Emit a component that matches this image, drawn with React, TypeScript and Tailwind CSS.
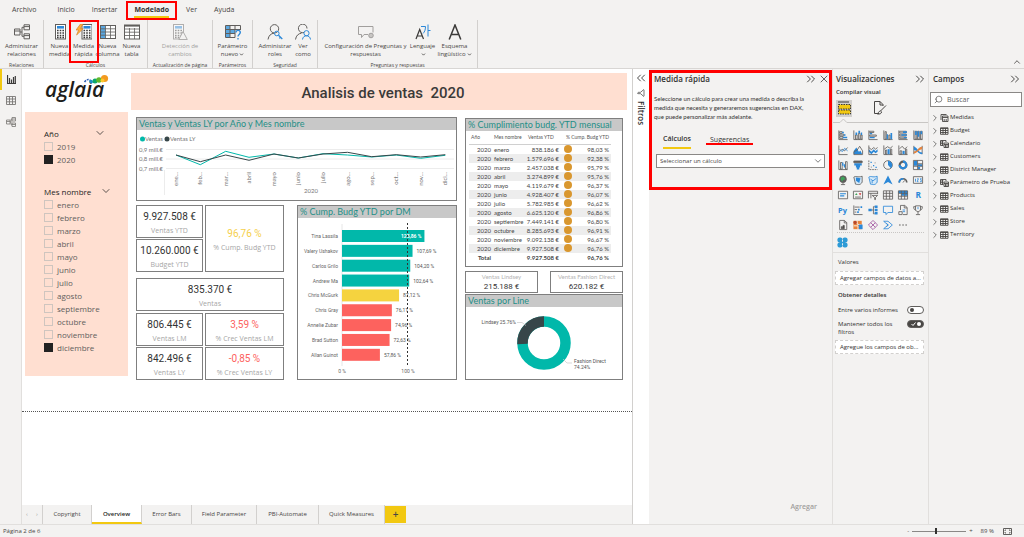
import { useState } from "react";
import type { ReactNode } from "react";
import clsx from "clsx";
import {
  ChevronDown,
  ChevronRight,
  ChevronsLeft,
  ChevronsRight,
  ChevronUp,
  Filter,
  Search,
  X,
} from "lucide-react";

const GRAY = "#605e5c";
const BLUE = "#2b88d8";
const TEAL = "#01b8aa";
const DARK = "#374649";

const menuTabs = ["Archivo", "Inicio", "Insertar", "Modelado", "Ver", "Ayuda"];

const months = [
  "enero",
  "febrero",
  "marzo",
  "abril",
  "mayo",
  "junio",
  "julio",
  "agosto",
  "septiembre",
  "octubre",
  "noviembre",
  "diciembre",
];

const tableRows = [
  ["838.186 €", "98,03 %"],
  ["1.579.696 €", "92,38 %"],
  ["2.457.038 €", "95,79 %"],
  ["3.274.899 €", "95,76 %"],
  ["4.119.679 €", "96,37 %"],
  ["4.928.407 €", "96,07 %"],
  ["5.782.985 €", "96,62 %"],
  ["6.625.120 €", "96,86 %"],
  ["7.449.141 €", "96,80 %"],
  ["8.285.693 €", "96,91 %"],
  ["9.092.138 €", "96,67 %"],
  ["9.927.508 €", "96,76 %"],
];

const managers = [
  { name: "Tina Lassila", value: 125.86, color: TEAL },
  { name: "Valery Ushakov", value: 107.69, color: TEAL },
  { name: "Carlos Grilo", value: 104.2, color: TEAL },
  { name: "Andrew Ma", value: 102.64, color: TEAL },
  { name: "Chris McGurk", value: 87.12, color: "#f5d33f" },
  { name: "Chris Gray", value: 76.11, color: "#fd625e" },
  { name: "Annelie Zubar", value: 74.96, color: "#fd625e" },
  { name: "Brad Sutton", value: 72.63, color: "#fd625e" },
  { name: "Allan Guinot", value: 57.86, color: "#fd625e" },
];

const fields = [
  { name: "Medidas", kind: "calc" },
  { name: "Budget", kind: "table" },
  { name: "Calendario", kind: "date" },
  { name: "Customers", kind: "table" },
  { name: "District Manager", kind: "table" },
  { name: "Parámetro de Prueba", kind: "date" },
  { name: "Products", kind: "table" },
  { name: "Sales", kind: "table" },
  { name: "Store", kind: "table" },
  { name: "Territory", kind: "table" },
];

const pages = [
  { name: "Copyright", width: "w-[49px]" },
  { name: "Overview", width: "w-[50px]" },
  { name: "Error Bars", width: "w-[50px]" },
  { name: "Field Parameter", width: "w-[65px]" },
  { name: "PBI-Automate", width: "w-[62px]" },
  { name: "Quick Measures", width: "w-[66px]" },
];

/* ---------- ribbon ---------- */

const RibbonIcon = ({ children }: { children: ReactNode }) => (
  <svg viewBox="0 0 16 16" className="size-4" fill="none" stroke={GRAY} aria-hidden="true">
    {children}
  </svg>
);

const Calculator = () => (
  <>
    <rect x="3.5" y=".5" width="10" height="14.5" fill="#fff" />
    <rect x="5" y="2" width="7" height="2.6" fill={BLUE} stroke="none" />
    <path d="M5 6.5h7M5 9h7M5 11.5h7M5 13.5h7" strokeWidth="1.4" strokeDasharray="1.6 1.1" stroke="#3b3a39" />
  </>
);

const icons = {
  relations: (
    <RibbonIcon>
      <path d="M.5 5h5.5v6H.5zM10 .8h5.5v5H10zM10 9.8h5.5v5H10zM.5 7h5.5M10 2.6h5.5M10 11.6h5.5M6 8h2M8 3.3v9M8 3.3h2M8 12.3h2" />
    </RibbonIcon>
  ),
  measure: (
    <RibbonIcon>
      <Calculator />
    </RibbonIcon>
  ),
  quick: (
    <RibbonIcon>
      <g transform="translate(2.5 0)">
        <Calculator />
      </g>
      <path d="M4.5 0 0 6h2.6L.6 11 7.2 4.6H4.3L7 0z" fill="#ffb13b" stroke="#d9822b" strokeWidth=".7" />
    </RibbonIcon>
  ),
  column: (
    <RibbonIcon>
      <rect x=".5" y="1.5" width="15" height="13" fill="#fff" />
      <path d="M1 2h4.500v12H1z" fill="#5ba7e0" stroke="none" />
      <path d="M.5 4.800h15M.5 8h15M.5 11.200h15M5.500 1.500v13M10.500 1.500v13" strokeWidth=".8" />
    </RibbonIcon>
  ),
  table: (
    <RibbonIcon>
      <rect x=".5" y="1" width="15" height="14" fill="#fff" />
      <path d="M.5 1.800h15" strokeWidth="1.600" />
      <path d="M.5 5h15M.5 8.200h15M.5 11.500h15M5.500 4v11M10.500 4v11" strokeWidth=".8" />
    </RibbonIcon>
  ),
  detect: (
    <RibbonIcon>
      <g opacity=".45">
        <g transform="translate(-2 0)">
          <Calculator />
        </g>
        <path d="m11 7.500 4.300 8H6.800z" fill="#f3f2f1" />
      </g>
    </RibbonIcon>
  ),
  param: (
    <RibbonIcon>
      <path d="M1 2h4v3.500H1zM1 9.500h4v4H1zM5 5.500h5v4H5zM1 5.500h4v4H1z" fill="#5ba7e0" stroke="none" />
      <path d="M.5 1.500h15V6M.5 1.500v12H10M.5 5.500h15M.5 9.500H10M5 1.500v12M10 1.500v12" />
      <path d="M11 8.500c.3-3 4.500-2.600 4.300.2-.2 1.700-2.300 1.900-2.300 3.800M13 14v1.500" stroke={BLUE} strokeWidth="1.300" />
    </RibbonIcon>
  ),
  roles: (
    <RibbonIcon>
      <circle cx="7.500" cy="4.800" r="4.200" />
      <path d="M1 15.500c.6-4 3-6 6-6.300" />
      <circle cx="9.800" cy="9.500" r="2.300" stroke={BLUE} />
      <path d="m11.500 11.200 3.800 3.800M13.500 13.200l-1.200 1.200" stroke={BLUE} strokeWidth="1.300" />
    </RibbonIcon>
  ),
  viewAs: (
    <RibbonIcon>
      <path d="M9 8.500a4.300 4.300 0 1 1 3-4M.5 15.500c.6-4 3-6 6-6.300" />
      <circle cx="11.500" cy="9.200" r="2.600" stroke={BLUE} />
      <path d="M7.500 15.500c.4-5 7.600-5 8 0" stroke={BLUE} />
    </RibbonIcon>
  ),
  qna: (
    <RibbonIcon>
      <g stroke="#a19f9d">
        <path d="M10 10.500H6l-2.500 3v-3H.5v-8h14.500v6" />
        <circle cx="13" cy="11.500" r="2.300" fill="#c8c6c4" />
      </g>
    </RibbonIcon>
  ),
  language: (
    <RibbonIcon>
      <path d="m1 15 3.700-9.500L8.500 15M2.300 12h5" stroke="#3b3a39" strokeWidth="1.200" />
      <path d="M6 2.500h4.500C10.500 6 9.500 8 8 9.500M13 .5v12M13 6.500h2.500" stroke={BLUE} />
    </RibbonIcon>
  ),
  schema: (
    <RibbonIcon>
      <path d="M2.200 15.500 8 1l5.800 14.500M4.200 10.500h7.600" stroke="#3b3a39" strokeWidth="1.500" />
    </RibbonIcon>
  ),
};

type Action = {
  icon: ReactNode;
  lines: [string, string];
  width: string;
  menu?: boolean;
  disabled?: boolean;
  marked?: boolean;
};

const ribbonGroups: { title: string; width: string; actions: Action[] }[] = [
  {
    title: "Relaciones",
    width: "w-11",
    actions: [{ icon: icons.relations, lines: ["Administrar", "relaciones"], width: "w-9" }],
  },
  {
    title: "Cálculos",
    width: "w-[104px]",
    actions: [
      { icon: icons.measure, lines: ["Nueva", "medida"], width: "w-6" },
      { icon: icons.quick, lines: ["Medida", "rápida"], width: "w-6", marked: true },
      { icon: icons.column, lines: ["Nueva", "columna"], width: "w-6" },
      { icon: icons.table, lines: ["Nueva", "tabla"], width: "w-6" },
    ],
  },
  {
    title: "Actualización de página",
    width: "w-[65px]",
    actions: [{ icon: icons.detect, lines: ["Detección de", "cambios"], width: "w-10", disabled: true }],
  },
  {
    title: "Parámetros",
    width: "w-10",
    actions: [{ icon: icons.param, lines: ["Parámetro", "nuevo"], width: "w-9", menu: true }],
  },
  {
    title: "Seguridad",
    width: "w-[65px]",
    actions: [
      { icon: icons.roles, lines: ["Administrar", "roles"], width: "w-9" },
      { icon: icons.viewAs, lines: ["Ver", "como"], width: "w-5" },
    ],
  },
  {
    title: "Preguntas y respuestas",
    width: "w-40",
    actions: [
      { icon: icons.qna, lines: ["Configuración de Preguntas y", "respuestas"], width: "w-[86px]" },
      { icon: icons.language, lines: ["Lenguaje", ""], width: "w-7", menu: true },
      { icon: icons.schema, lines: ["Esquema", "lingüístico"], width: "w-9", menu: true },
    ],
  },
];

const Mark = ({ className }: { className: string }) => (
  <span className={clsx("pointer-events-none absolute z-10 border-[#f00]", className)} />
);

const Ribbon = () => (
  <header className="border-b border-[#d8d6d4] bg-[#f3f2f1] text-[#484644]">
    <nav className="flex h-5 gap-[17px] pl-3 text-[7px] leading-5">
      {menuTabs.map((tab) => (
        <button
          key={tab}
          className={clsx(
            "relative flex h-5",
            tab === "Archivo" && "mr-1",
            tab === "Modelado" && "font-bold text-[#323130]",
          )}
        >
          {tab}
          {tab === "Modelado" && (
            <>
              <span className="absolute inset-x-0 bottom-0.5 h-0.5 bg-[#f2c811]" />
              <Mark className="-inset-x-2 top-px bottom-0 border-2" />
            </>
          )}
        </button>
      ))}
    </nav>
    <div className="flex h-12">
      {ribbonGroups.map((group) => (
        <section
          key={group.title}
          className={clsx("flex shrink-0 flex-col items-center border-r border-[#d2d0ce]", group.width)}
        >
          <div className="flex">
            {group.actions.map((action) => (
              <button
                key={action.lines.join(" ")}
                disabled={action.disabled}
                className={clsx(
                  "relative flex h-[42px] flex-col items-center pt-1 text-[6px] leading-[8px] whitespace-nowrap",
                  action.width,
                  action.disabled && "text-[#a19f9d]",
                )}
              >
                {action.icon}
                <span className="pt-0.5">{action.lines[0]}</span>
                <span className="flex h-2 items-center">
                  {action.lines[1]}
                  {action.menu && <ChevronDown className="ml-px size-[5px]" strokeWidth={4} />}
                </span>
                {action.marked && <Mark className="-inset-x-[3px] top-0 h-[43px] border-2" />}
              </button>
            ))}
          </div>
          <span className="text-[5px] leading-[6px] whitespace-nowrap">{group.title}</span>
        </section>
      ))}
      <button className="mt-auto mr-0.5 mb-px ml-auto" aria-label="Contraer la cinta">
        <ChevronUp className="size-2.5" />
      </button>
    </div>
  </header>
);

/* ---------- left rail ---------- */

const Rail = () => (
  <nav className="flex w-[22px] shrink-0 flex-col border-r border-[#e1dfdd] bg-[#f3f2f1]">
    <button className="flex h-[21px] items-center justify-center border-l-2 border-[#f2c811]" aria-label="Informe">
      <svg viewBox="0 0 9 9" className="size-[9px]" fill="none" stroke="#3b3a39">
        <path d="M.5 0v8.500H9M2.500 8V3M4.500 8V4.500M6.500 8V2M8.300 8V1" strokeWidth="1.200" />
      </svg>
    </button>
    <button className="flex h-[21px] items-center justify-center" aria-label="Datos">
      <svg viewBox="0 0 10 9" className="h-[9px] w-2.5" fill="none" stroke="#797775">
        <path d="M.5.5h9v8h-9zM.5 3h9M.5 5.800h9M3.500.5v8M6.500.5v8" strokeWidth=".9" />
      </svg>
    </button>
    <button className="flex h-[21px] items-center justify-center" aria-label="Modelo">
      <svg viewBox="0 0 10 10" className="size-2.5" fill="none" stroke="#797775">
        <path d="M.5 3h3.500v4H.5zM6 .5h3.500v3.500H6zM6 6h3.500v3.500H6zM.5 4.500H4M6 2h3.500M6 7.500h3.500M4 5h1M5 2.200v5.600M5 2.200h1M5 7.800h1" strokeWidth=".8" />
      </svg>
    </button>
  </nav>
);

/* ---------- report ---------- */

const Logo = () => (
  <svg viewBox="0 0 106 37" className="h-[37px] w-[106px] shrink-0" role="img" aria-label="aglaia">
    <text x="20" y="24" fontFamily="'Open Sans', sans-serif" fontSize="21" fontStyle="italic" fontWeight="600" fill="#1d1d1b">
      aglaia
    </text>
    <path d="M59.500 9q3-4 6-1.500" fill="none" stroke="#2f5fb3" strokeWidth="1.500" strokeDasharray="2 1" />
    <circle cx="66" cy="8.500" r="1.800" fill="#1b8fc4" />
    <circle cx="70" cy="8" r="2.500" fill="#0da66b" />
    <circle cx="74" cy="7" r="2.800" fill="#5fb82e" />
    <circle cx="79.500" cy="5.500" r="3.600" fill="#f39a1f" />
    <circle cx="77.500" cy="7.500" r="2" fill="#fdc82f" />
  </svg>
);

const Check = ({ label, initial }: { label: string; initial: boolean }) => {
  const [on, setOn] = useState(initial);
  return (
    <label className="flex h-[13px] items-center gap-1 text-[8px] leading-[13px] text-[#605e5c]">
      <input
        type="checkbox"
        checked={on}
        onChange={() => setOn(!on)}
        className="size-[9px] appearance-none border border-[#cfc5bf] checked:border-[#222] checked:bg-[#222]"
      />
      {label}
    </label>
  );
};

const Slicers = () => (
  <aside className="self-start bg-[#ffdfd1] pt-3.5 pb-[22px] pl-[19px]">
    <fieldset>
      <legend className="flex h-[14px] w-[62px] items-center justify-between text-[8px] leading-[13px] text-[#252423]">
        Año <ChevronDown className="size-3" strokeWidth={1.5} />
      </legend>
      <Check label="2019" initial={false} />
      <Check label="2020" initial={true} />
    </fieldset>
    <fieldset className="mt-[18px]">
      <legend className="flex h-[14px] w-[68px] items-center justify-between text-[8px] leading-[13px] text-[#252423]">
        Mes nombre <ChevronDown className="size-3" strokeWidth={1.5} />
      </legend>
      {months.map((month) => (
        <Check key={month} label={month} initial={month === "diciembre"} />
      ))}
    </fieldset>
  </aside>
);

const Card = ({ title, className, children }: { title?: string; className?: string; children: ReactNode }) => (
  <section className={clsx("min-w-0 border border-[#7f7f7f] bg-white", className)}>
    {title && (
      <h2 className="h-3 overflow-hidden bg-[#c8c8c8] pl-0.5 font-['Lato',sans-serif] text-[9px] leading-3 whitespace-nowrap text-[#1f8f87]">
        {title}
      </h2>
    )}
    {children}
  </section>
);

const Kpi = ({ value, label, tone = "text-[#333]" }: { value: string; label: string; tone?: string }) => (
  <Card className="flex min-h-[33px] flex-col items-center justify-center pt-1 whitespace-nowrap">
    <p className={clsx("font-['Roboto',sans-serif] text-[10px] leading-[14px]", tone)}>{value}</p>
    <p className="text-[7px] leading-[13px] text-[#a6a6a6]">{label}</p>
  </Card>
);

const lineX = [39, 63.3, 88.7, 112, 137, 161.3, 186, 210.5, 234.7, 259.3, 283.7, 308.3];
const ventas = [25, 34.7, 21.3, 27.3, 24, 28, 23.7, 25, 27, 25, 28.3, 25.3];
const ventasLY = [25, 31.7, 25, 30.3, 24, 28, 24, 22.3, 26.7, 24.7, 27, 24.7];
const lineLabels = ["ene...", "feb...", "mar...", "abril", "mayo", "junio", "julio", "ago...", "sep...", "oct...", "nov...", "dici..."];

const toPoints = (ys: number[]) => ys.map((y, i) => `${lineX[i]},${y}`).join(" ");

const LineChart = () => (
  <svg viewBox="0 0 319 70" className="block h-auto w-full font-['Lato',sans-serif] text-[6px]" fill="#777">
    <circle cx="5.500" cy="9" r="2.500" fill={TEAL} />
    <text x="8" y="11">Ventas</text>
    <circle cx="30" cy="9" r="2.500" fill={DARK} />
    <text x="33" y="11">Ventas LY</text>
    {["0,9 mill.€", "0,8 mill.€", "0,7 mill.€"].map((label, i) => (
      <g key={label}>
        <text x="2" y={21.5 + i * 9.5}>{label}</text>
        <path d={`M29 ${19.5 + i * 9.5}H317`} stroke="#ececec" />
      </g>
    ))}
    <path d="M27.500 40v25" stroke="#ececec" />
    <polyline points={toPoints(ventas)} fill="none" stroke={TEAL} />
    <polyline points={toPoints(ventasLY)} fill="none" stroke={DARK} />
    {lineLabels.map((label, i) => (
      <text key={label} transform={`translate(${lineX[i] + 2} 42) rotate(-90)`} textAnchor="end">
        {label}
      </text>
    ))}
    <text x="174" y="63" textAnchor="middle">2020</text>
  </svg>
);

const BarChart = () => (
  <svg viewBox="0 0 158 161" className="block h-auto w-full font-['Roboto',sans-serif] text-[5px]" fill="#666">
    <path d="M44 6v142" stroke="#e6e6e6" />
    {managers.map(({ name, value, color }, i) => {
      const y = 18 + i * 14.85;
      const width = value * 0.655;
      const inside = value > 120;
      return (
        <g key={name}>
          <text x="40" y={y + 2} textAnchor="end">{name}</text>
          <rect x="44" y={y - 6} width={width} height="12" fill={color} />
          <text
            x={inside ? 41 + width : 48 + width}
            y={y + 2}
            textAnchor={inside ? "end" : "start"}
            fill={inside ? "#fff" : "#555"}
            fontWeight={inside ? 700 : 400}
          >
            {value.toFixed(2).replace(".", ",")} %
          </text>
        </g>
      );
    })}
    <path d="M109.500 5v143" stroke="#333" strokeDasharray="2 2" />
    <text x="44" y="155" textAnchor="middle">0 %</text>
    <text x="110" y="155" textAnchor="middle">100 %</text>
  </svg>
);

const Donut = () => (
  <svg viewBox="0 0 156 72" className="block h-auto w-full font-['Roboto',sans-serif] text-[5px]" fill="#555">
    <circle cx="78" cy="36" r="21.500" fill="none" stroke={TEAL} strokeWidth="10.500" />
    <path d="M78 14.500A21.500 21.500 0 0 0 56.500 37" fill="none" stroke={DARK} strokeWidth="10.500" />
    <path d="M51 15.500h5l4 3M97 52l4 4h5" fill="none" stroke="#c8c8c8" strokeWidth=".7" />
    <text x="50" y="17" textAnchor="end">Lindsey 25.76%</text>
    <text x="108" y="56">Fashion Direct</text>
    <text x="108" y="62">74.24%</text>
  </svg>
);

const BudgetTable = () => (
  <table className="mx-[3px] mb-1 w-[142px] table-fixed font-['Lato',sans-serif] text-[6px] leading-[9px] whitespace-nowrap text-[#444]">
    <colgroup>
      <col className="w-[22px]" />
      <col className="w-[31px]" />
      <col className="w-[39px]" />
      <col className="w-[50px]" />
    </colgroup>
    <thead>
      <tr className="h-[13px] border-b border-[#d0d0d0] text-left text-[5px] text-[#555]">
        <th className="pl-0.5 font-normal">Año</th>
        <th className="pl-[3px] font-normal">Mes nombre</th>
        <th className="pl-1.5 font-normal">Ventas YTD</th>
        <th className="pr-0.5 text-right font-normal">% Cump. Budg YTD</th>
      </tr>
    </thead>
    <tbody>
      {tableRows.map(([sales, pct], i) => (
        <tr key={months[i]} className="h-[9px] even:bg-[#ededed]">
          <td className="text-right">2020</td>
          <td className="pl-[3px]">{months[i]}</td>
          <td className="pr-0.5 text-right">{sales}</td>
          <td className="pr-0.5">
            <span className="flex items-center justify-between pl-[3px]">
              <span className="size-2 rounded-full bg-[#d9972f]" />
              {pct}
            </span>
          </td>
        </tr>
      ))}
    </tbody>
    <tfoot>
      <tr className="h-[9px] font-bold">
        <td className="text-right">Total</td>
        <td />
        <td className="pr-0.5 text-right">9.927.508 €</td>
        <td className="pr-0.5 text-right">96,76 %</td>
      </tr>
    </tfoot>
  </table>
);

const SmallKpi = ({ label, value }: { label: string; value: string }) => (
  <Card className="h-[22px] text-center whitespace-nowrap">
    <p className="font-['Lato',sans-serif] text-[6px] leading-[9px] text-[#b3b3b3]">{label}</p>
    <p className="font-['Roboto',sans-serif] text-[8px] leading-[11px] text-[#333]">{value}</p>
  </Card>
);

const Report = () => (
  <div className="bg-white">
    <div className="flex pt-1 pr-[5px] pl-[3px]">
      <Logo />
      <h1 className="flex h-[37px] flex-1 items-center justify-center bg-[#ffdfd1] pt-1 pl-2 font-['Roboto',sans-serif] text-[15px] font-medium whitespace-pre text-[#3b3a39]">
        {"Analisis de ventas  2020"}
      </h1>
    </div>
    <div className="grid grid-cols-[103fr_321fr_158fr] gap-2 pt-0.5 pr-[9px] pl-[3px]">
      <Slicers />
      <div className="flex min-w-0 flex-col gap-1 pt-[5px]">
        <Card title="Ventas y Ventas LY por Año y Mes nombre">
          <LineChart />
        </Card>
        <div className="grid grid-cols-[148fr_160fr] items-start gap-[13px]">
          <div className="flex flex-col">
            <div className="grid grid-cols-[67fr_79fr] gap-0.5">
              <div className="grid gap-px">
                <Kpi value="9.927.508 €" label="Ventas YTD" />
                <Kpi value="10.260.000 €" label="Budget YTD" />
              </div>
              <Kpi value="96,76 %" label="% Cump. Budg YTD" tone="text-[#f5cf4a]" />
            </div>
            <div className="mt-1.5 grid">
              <Kpi value="835.370 €" label="Ventas" />
            </div>
            <div className="mt-0.5 grid grid-cols-[67fr_79fr] gap-x-0.5 gap-y-px">
              <Kpi value="806.445 €" label="Ventas LM" />
              <Kpi value="3,59 %" label="% Crec Ventas LM" tone="text-[#fd625e]" />
              <Kpi value="842.496 €" label="Ventas LY" />
              <Kpi value="-0,85 %" label="% Crec Ventas LY" tone="text-[#fd625e]" />
            </div>
          </div>
          <Card title="% Cump. Budg YTD por DM">
            <BarChart />
          </Card>
        </div>
      </div>
      <div className="min-w-0 pt-1.5">
        <Card title="% Cumplimiento budg. YTD mensual">
          <BudgetTable />
        </Card>
        <div className="mt-1 mb-px grid grid-cols-2 gap-3">
          <SmallKpi label="Ventas Lindsey" value="215.188 €" />
          <SmallKpi label="Ventas Fashion Direct" value="620.182 €" />
        </div>
        <Card title="Ventas por Line">
          <Donut />
        </Card>
      </div>
    </div>
    <div className="mt-[31px] border-t border-dotted border-[#555]" />
  </div>
);

const PageTabs = () => (
  <nav className="mt-auto flex h-[19px] bg-[#f3f2f1] text-[6px] text-[#484644]">
    <div className="flex w-[21px] items-center justify-around border-r border-[#d2d0ce] text-[#a19f9d]">
      <button aria-label="Anterior">‹</button>
      <button aria-label="Siguiente">›</button>
    </div>
    {pages.map(({ name, width }) => (
      <button
        key={name}
        className={clsx(
          "border-r border-[#d2d0ce] whitespace-nowrap",
          width,
          name === "Overview" && "border-b-2 border-b-[#f2c811] bg-white pt-0.5 font-semibold text-[#252423]",
        )}
      >
        {name}
      </button>
    ))}
    <button className="my-px w-[21px] bg-[#f2c811] text-[10px] font-semibold" aria-label="Nueva página">
      +
    </button>
  </nav>
);

/* ---------- right panels ---------- */

const QuickMeasure = () => (
  <section className="relative flex w-[183px] shrink-0 flex-col bg-[#f3f2f1] pt-1 text-[#323130]">
    <Mark className="inset-x-0 top-px h-[120px] border-3" />
    <div className="flex h-3 items-center pr-0.5 pl-[5px]">
      <h2 className="flex-1 text-[8px] leading-3 font-semibold">Medida rápida</h2>
      <button aria-label="Contraer">
        <ChevronsRight className="size-3.5" strokeWidth={1.5} />
      </button>
      <button aria-label="Cerrar">
        <X className="size-3" strokeWidth={1.5} />
      </button>
    </div>
    <p className="mt-[9px] px-[5px] font-['Lato',sans-serif] text-[6px] leading-[9px]">
      Seleccione un cálculo para crear una medida o describa la
      <br />
      medida que necesita y generaremos sugerencias en DAX,
      <br />
      que puede personalizar más adelante.
    </p>
    <div role="tablist" className="mt-2.5 flex gap-[19px] pl-[14px] text-[7px] leading-[14px]">
      <button role="tab" aria-selected="true" className="h-[18px] border-b-2 border-[#f2c811] font-semibold">
        Cálculos
      </button>
      <button role="tab" aria-selected="false" className="relative h-[18px]">
        Sugerencias
        <span className="absolute -inset-x-1 bottom-1 h-0.5 bg-[#f00]" />
      </button>
    </div>
    <label className="relative mt-[5px] mr-[7px] ml-[7px] flex">
      <select
        aria-label="Cálculo"
        className="h-[14px] w-full appearance-none border border-[#8a8886] bg-white pl-[3px] text-[6px] leading-3 text-[#484644]"
      >
        <option>Seleccionar un cálculo</option>
      </select>
      <ChevronDown className="absolute top-0.5 right-0.5 size-2.5" strokeWidth={1.5} />
    </label>
    <button disabled className="mt-auto mr-[15px] mb-3 self-end text-[7px] leading-[10px] font-semibold text-[#a19f9d]">
      Agregar
    </button>
  </section>
);

const f = { fill: BLUE, stroke: "none" };

// one entry per gallery cell, drawn on a 12 × 12 grid
const visuals: ReactNode[] = [
  <><path d="M1 .5v11h10.500" /><path d="M2 2h3v2H2zM2 5h5v2H2zM2 8h4v2H2z" /><path d="M5 2h2v2H5zM7 5h2v2H7zM6 8h5v2H6z" {...f} /></>,
  <><path d="M1 .5v11h10.500M3 6h2v5H3zM6.500 4h2v7h-2zM9.500 6h1.500v5H9.500z" /><path d="M3 3h2v3H3zM6.500 1h2v3h-2zM9.500 3H11v3H9.500z" {...f} /></>,
  <><path d="M1 .5v11h10.500M2 1.500h5v1.500H2zM2 6h8v1.500H2z" /><path d="M2 3.500h3v1.700H2zM2 8.300h6V10H2z" {...f} /></>,
  <><path d="M1 .5v11h10.500M2.500 2h1.500v9H2.500zM7 6h1.500v5H7z" /><path d="M4.500 5H6v6H4.500zM9 3.500h2V11H9z" {...f} /></>,
  <><path d="M1 .5v11h10.500M2 1.500h8v2H2zM2 5h8v2H2zM2 8.500h8V10H2z" /><path d="M6 1.500h4.500v2H6zM4 5h6.500v2H4zM7 8.500h3.500V10H7z" {...f} /></>,
  <><path d="M1 .5v11h10.500M2.500 1.500h2V11h-2zM5.500 1.500h2V11h-2zM9 1.500h2V11H9z" /><path d="M2.500 1.500h2V6h-2zM5.500 1.500h2V8h-2zM9 1.500h2V5H9z" {...f} /></>,
  <><path d="M1 .5v11h10.500M2 8l3-3 3 2 3.500-4" /><path d="m2 5 3 3 3-4 3.500 3" stroke={BLUE} /></>,
  <><path d="M1 11V7l3-4 3 5 2-1 2 4z" {...f} /><path d="M1 11.500h10.500V7L8 1.500 5 6 1 8z" /></>,
  <><path d="m1 5 3 3 3-3 2 2.500L11.500 5v3L9 10 7 8l-3 3-3-3z" {...f} /><path d="M1 .5v11h10.500M1 3l3 2.500L7 3l2 2 2.500-2" /></>,
  <><path d="M1 .5v11h10.500M3 6h1.500v5H3zM9 5h1.500v6H9zM1.500 5l4-3 3 2 3-2.500" /><path d="M5.500 5H8v6H5.500z" {...f} /></>,
  <><path d="M1 .5v11h10.500M2.500 7h2v4h-2zM9 5h1.500v6H9zM2 4.500l3-3 3 3.500 3-3" /><path d="M5.500 7H8v4H5.500z" {...f} /></>,
  <><path d="M1 1v10M11 1v10M1 9c4 0 5-6 10-6" /><path d="M1 2c4 0 5 7 10 7v2C6 11 5 6 1 6z" {...f} /><path d="M1 8c4 0 6-6 10-6v3c-4 0-6 5-10 5z" fill="#e8833a" stroke="none" /></>,
  <><path d="M1 .5v11h10.500M3 3h2v8H3zM9 2h2v9H9z" /><path d="M5 3h1.500v4H5zM7 5h1.500v4H7z" {...f} /></>,
  <><path d="M1.500 4h9v2.500h-2V9h-1v2.500h-3V9h-1V6.500h-2z" {...f} /><path d="M1 1.200h10v2H1z" fill={GRAY} /></>,
  <><path d="M1 .5v11h10.500" strokeDasharray="2 1" /><path d="M3 2h1.500v1.500H3zM6 6h1.500v1.500H6zM9 8h1.500v1.500H9z" {...f} /><path d="M8.500 3v1M4 8v1" /></>,
  <><circle cx="6" cy="6" r="5.200" /><path d="M6 .800a5.200 5.200 0 0 1 3.500 9L6 6z" {...f} /></>,
  <><circle cx="6" cy="6" r="4" strokeWidth="2.600" /><path d="M6 2a4 4 0 1 1-4 4" stroke={BLUE} strokeWidth="2.600" /></>,
  <><path d="M1 1h4v6H1zM6 5h5v2.500H6zM6 8.500h2.500V11H6z" {...f} /><path d="M.5.5h11v11H.5zM5.500.5v11M5.500 4.500h6M.5 7.500h11" /></>,
  <><circle cx="6" cy="5" r="4" fill={GRAY} /><path d="M4 2.500 7 2l2 3-3 1-1 2-2-3z" fill="#3fa35a" stroke="none" /><path d="M6 9v2.500M3.500 11.500h5" /></>,
  <><path d="M1 2.500c3-2 4 1 10-1v7c-2 4-5 3-8 2.500z" fill="#d5e8f7" /><path d="M3.500 3v4l4 2.500L9 4z" {...f} /></>,
  <><path d="M1 2.500c3-2 4 1 10-1v7c-2 4-5 3-8 2.500z" fill="#d5e8f7" stroke={BLUE} /><path d="M3 5l3 2 4-3M5 10V7" stroke={BLUE} /></>,
  <path d="M6 .5 11.500 11.500 6 8.500.5 11.500z" {...f} />,
  <><path d="M1.500 9a4.500 4.500 0 0 1 9 0" strokeWidth="2" /><path d="M1.500 9a4.500 4.500 0 0 1 5-4.500" stroke={BLUE} strokeWidth="2" /><path d="M6 9l2-2.500" /></>,
  <><path d="M.5 2h11v8H.5z" /><path d="M3 4.500v3.500M5 4.500h1.500L5 8h1.500M8.500 4.500H10l-1 1.500 1 .5V8H8.500" stroke={BLUE} /></>,
  <><path d="M.5 1.500h11v9H.5z" /><path d="M2.500 4.500h7M2.500 7h5" stroke={BLUE} strokeWidth="1.300" /></>,
  <><path d="M.5 1.500h11v9H.5z" /><path d="M4 3.500 5.500 6h-3z" fill="#3fa35a" stroke="none" /><path d="M8.500 6.500 10 4H7z" fill="#d13438" stroke="none" /><path d="M2.500 8.500h7" /></>,
  <path d="M.5 10V1.500h11V5M.5 4h11M3.500 4v6M5 6.500h6.500L9 9v2.500H8V9z" />,
  <path d="M.5 1h11v10H.5zM.5 4h11M.5 7.500h11M4 1v10M8 1v10" />,
  <><path d="M4 4h3.500v3H4zM8 1h3.500v6H8zM.5 1H8v3H.5z" {...f} /><path d="M.5 1h11v10H.5zM.5 4h11M.5 7.500h11M4 1v10M8 1v10" /></>,
  <text x="3" y="10" fontSize="10" fontWeight="700" {...f}>R</text>,
  <text x="0" y="9" fontSize="9" fontWeight="700" {...f}>Py</text>,
  <><path d="M1 .5v11h10.500M2 2.500h6M2 5.500h3M2 8.500h2" /><path d="M9 1.500h2v2H9zM6 4.500h2v2H6zM5 7.500h2v2H5z" {...f} /></>,
  <><path d="M4 6h2.500M6.500 2v8.500M6.500 2h1.500M6.500 10.500h1.500" /><path d="M.5 4.500h4v3h-4zM8 .5h3.500v3H8zM8 4.500h3.500v3H8zM8 8.500h3.500v3H8z" {...f} /></>,
  <path d="M.5 1.500h11v7.500H6L3.500 11.500V9h-3z" stroke={BLUE} />,
  <><path d="M3 6V.5h5L11 3v8.500H6M7.500.5V3.500H11" /><path d="M1 8h4v3.500H1z" /><path d="M5.500 6h3M5.500 8h3" stroke={BLUE} /></>,
  <><path d="M3 1h6v4c0 4-6 4-6 0zM3 2H.8c0 3 1 4 2.700 4M9 2h2.200c0 3-1 4-2.700 4M6 8v3M3.500 11.500h5" /><path d="M6 2.500v2.500" stroke={BLUE} /></>,
  <><path d="M2 .5h5.500L10.500 3v8.500H2zM7.500.5V3.500h3" /><path d="M4 8h1.500v2.500H4zM6 6.500h1.500v4H6z" fill="#3b3a39" /></>,
  <><path d="M.5 1h10v10H.5z" fill="#e8833a" stroke="none" /><path d="M5 1v4l5 1M1 7h5v4" stroke="#fff" /><path d="M7 5.500h4.500V11H7z" {...f} /><circle cx="2.500" cy="3" r="2" fill="#b7472a" stroke="none" /></>,
  <path d="M6 .5 11.500 6 6 11.500.5 6zM3.200 3.200l5.600 5.600M8.800 3.200 3.200 8.800" stroke="#a0549f" />,
  <path d="M.8 1.500H6L11.200 6 6 10.500H.8L6 6zM4 4l2.500 2L4 8" stroke={BLUE} />,
  <path d="M1.500 6H3M5.300 6h1.500M9 6h1.500" stroke="#3b3a39" strokeWidth="1.300" />,
];

const Toggle = ({ label, initial }: { label: string; initial: boolean }) => {
  const [on, setOn] = useState(initial);
  return (
    <label className="flex justify-between text-[6px] leading-[8px] text-[#323130]">
      <span className="w-[62px]">{label}</span>
      <span className="relative flex h-2 w-[17px] shrink-0">
        <input
          type="checkbox"
          role="switch"
          checked={on}
          onChange={() => setOn(!on)}
          className="flex h-2 w-full appearance-none items-center rounded-full border border-[#605e5c] bg-white px-0.5 before:size-1 before:rounded-full before:bg-[#484644] checked:justify-end checked:bg-[#484644] checked:before:bg-white"
        />
        {on && (
          <svg viewBox="0 0 5 4" className="pointer-events-none absolute top-0.5 left-1 h-1 w-[5px]" fill="none" stroke="#fff">
            <path d="m.5 2 1.500 1.500L4.500.5" />
          </svg>
        )}
      </span>
    </label>
  );
};

const PanelTitle = ({ children }: { children: ReactNode }) => (
  <div className="flex h-3 items-center justify-between">
    <h2 className="text-[8px] leading-3 font-semibold">{children}</h2>
    <button aria-label="Contraer">
      <ChevronsRight className="size-3.5" strokeWidth={1.5} />
    </button>
  </div>
);

const Visualizations = () => (
  <section className="w-24 shrink-0 border-l border-[#e1dfdd] bg-[#f3f2f1] pt-1 text-[#323130]">
    <div className="pr-px pl-[3px]">
      <PanelTitle>Visualizaciones</PanelTitle>
      <h3 className="mt-[3px] text-[6px] leading-[9px] font-semibold">Compilar visual</h3>
    </div>
    <div className="mt-0.5 flex h-[18px] items-center gap-[21px] pl-[3px]">
      <button className="flex h-[17px] w-4 items-center justify-center bg-[#d2d0ce]" aria-label="Compilar">
        <svg viewBox="0 0 13 14" className="h-3.5 w-[13px]" fill="none" stroke="#3b3a39">
          <path d="M0 1h11" />
          <path d="M.5 3.500h12v4.500H.5zM.5 9h12v4H.5z" fill="#f2c811" strokeDasharray="1.500 1" />
        </svg>
      </button>
      <button aria-label="Formato">
        <svg viewBox="0 0 14 14" className="size-3.5" fill="none" stroke="#484644">
          <path d="M6 12.500H1.500V.5H7l3 3V5M7 .5V4h3M13 4.500 7.500 10M7.500 10c-2 0-2 2.500-3.500 2.800 2.500.8 4.800-.3 4.500-2z" />
        </svg>
      </button>
    </div>
    <svg viewBox="0 0 96 6" preserveAspectRatio="none" className="h-1.5 w-full" fill="none" stroke="#c8c6c4">
      <path d="M0 5.500h7L10.500 2 14 5.500h82" />
    </svg>
    <div className="mt-1 grid auto-rows-[15px] grid-cols-[repeat(6,15px)] pl-[2px]">
      {visuals.map((shape, i) => (
        <button key={i} className="flex items-center justify-center" aria-label={`Visual ${i + 1}`}>
          <svg viewBox="0 0 12 12" className="size-2.5 overflow-visible" fill="none" stroke={GRAY}>
            {shape}
          </svg>
        </button>
      ))}
    </div>
    <div className="mx-1 border-t border-dotted border-[#c8c6c4]" />
    <button className="mt-1 mb-1 ml-1 block" aria-label="Visual personalizado">
      <svg viewBox="0 0 12 12" className="size-[11px]" fill="#2e9bd6">
        <rect x=".5" y=".5" width="5.500" height="5.500" rx="2.200" />
        <rect x="6" y=".5" width="5.500" height="5.500" rx="2.200" />
        <rect x=".5" y="6" width="5.500" height="5.500" rx="2.200" />
        <rect x="6" y="6" width="5.500" height="5.500" rx="2.200" />
        <path d="M3 3h6v6H3z" />
        <path d="M5.500 3h1v2.200h-1zM5.500 6.800h1V9h-1z" fill="#f3f2f1" />
      </svg>
    </button>
    <div className="border-t border-[#e1dfdd] px-[2px] pt-[5px] text-[6px] leading-[9px]">
      <h3 className="pl-[3px]">Valores</h3>
      <p className="mt-1 mr-0.5 truncate border border-dashed border-[#d2d0ce] bg-white pl-1 leading-[12px]">
        Agregar campos de datos a...
      </p>
      <div className="flex flex-col gap-1.5 pt-1.5 pr-0.5 pl-[3px]">
        <h3 className="font-semibold">Obtener detalles</h3>
        <Toggle label="Entre varios informes" initial={false} />
        <Toggle label="Mantener todos los filtros" initial={true} />
      </div>
      <p className="mt-1 mr-0.5 truncate border border-dashed border-[#d2d0ce] bg-white pl-1 leading-[12px]">
        Agregue los campos de ob...
      </p>
    </div>
  </section>
);

const FieldIcon = ({ kind }: { kind: string }) => (
  <svg viewBox="0 0 9 8" className="h-2 w-[9px]" fill="none" stroke="#484644" strokeWidth=".9">
    {kind === "table" && <path d="M.5.8h7.500v6.500H.5zM.5 1.500H8M.5 3.500H8M.5 5.500H8M3 1v6M5.500 1v6" />}
    {kind === "calc" && <path d="M1 6V.5h5.500M2.500 2H8v5.500H2.500zM2.500 3.500H8M4.200 5v2M6.200 5v2" />}
    {kind === "date" && <path d="M3.500 5.500h-3V.5H6V2M.5 2h3M.5 3.700h3M2.500.5v5M4 3h4.500v4.500H4zM4 4.500h4.500M5.500 5v2.500M7 5v2.500" />}
  </svg>
);

const Fields = () => (
  <section className="w-24 shrink-0 border-l border-[#e1dfdd] bg-[#f3f2f1] pt-1 pr-0.5 pl-[1px] text-[#323130]">
    <div className="pl-[3px]">
      <PanelTitle>Campos</PanelTitle>
    </div>
    <label className="mt-[7px] flex h-[15px] items-center gap-1 border border-[#8a8886] bg-white pl-[3px]">
      <Search className="size-[9px] shrink-0 -scale-x-100" strokeWidth={1.5} />
      <input
        aria-label="Buscar"
        placeholder="Buscar"
        className="w-full min-w-0 text-[7px] leading-[12px] outline-none placeholder:text-[#605e5c]"
      />
    </label>
    <ul className="pt-1 text-[6px] leading-[13px]">
      {fields.map(({ name, kind }) => (
        <li key={name}>
          <button className="flex h-[13px] items-center whitespace-nowrap">
            <ChevronRight className="size-2.5" strokeWidth={1.5} />
            <FieldIcon kind={kind} />
            <span className="pl-px">{name}</span>
          </button>
        </li>
      ))}
    </ul>
  </section>
);

const StatusBar = () => (
  <footer className="flex h-[13px] items-center border-t border-[#e1dfdd] bg-[#f3f2f1] pr-3 pl-[3px] text-[6px] leading-3 text-[#484644]">
    <span>Página 2 de 6</span>
    <button className="ml-auto" aria-label="Alejar">
      -
    </button>
    <input
      type="range"
      aria-label="Zoom"
      defaultValue={43}
      className="mx-[3px] h-px w-[54px] appearance-none bg-[#8a8886] [&::-webkit-slider-thumb]:h-1.5 [&::-webkit-slider-thumb]:w-0.5 [&::-webkit-slider-thumb]:appearance-none [&::-webkit-slider-thumb]:bg-[#323130]"
    />
    <button aria-label="Acercar">+</button>
    <span className="pr-[9px] pl-2">89 %</span>
    <button aria-label="Ajustar a la página">
      <svg viewBox="0 0 9 7" className="h-[7px] w-[9px]" fill="none" stroke={GRAY}>
        <path d="M.5.5h8v6h-8z" />
        <path d="M2 3V2h1M6 2h1v1M7 4v1H6M3 5H2V4" strokeWidth=".9" />
      </svg>
    </button>
  </footer>
);

export default function App() {
  return (
    <div className="flex min-h-screen flex-col bg-white font-['Open_Sans',sans-serif]">
      <Ribbon />
      <main className="flex flex-1">
        <Rail />
        <div className="flex min-w-0 flex-1 flex-col">
          <Report />
          <PageTabs />
        </div>
        <aside className="flex w-[17px] shrink-0 flex-col items-center border-l border-[#d2d0ce] pt-0.5 text-[#323130]">
          <button aria-label="Expandir filtros">
            <ChevronsLeft className="size-3.5" strokeWidth={1.5} />
          </button>
          <Filter className="mt-1 size-2 rotate-90" strokeWidth={2} />
          <h2 className="mt-1 text-[8px] leading-3 font-semibold [writing-mode:vertical-rl]">Filtros</h2>
        </aside>
        <QuickMeasure />
        <Visualizations />
        <Fields />
      </main>
      <StatusBar />
    </div>
  );
}
